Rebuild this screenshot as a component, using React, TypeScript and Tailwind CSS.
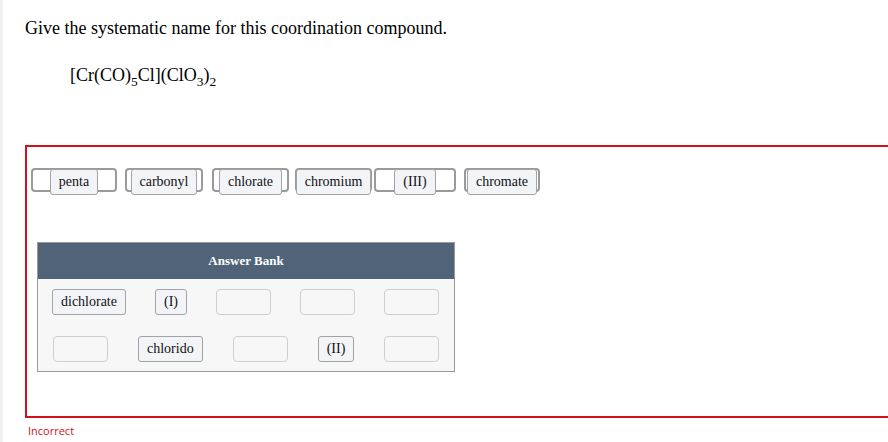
import React from "react";

type Slot = { label: string; w: string; ml: string };

const slots: Slot[] = [
  { label: "penta", w: "w-[86px]", ml: "ml-0" },
  { label: "carbonyl", w: "w-[78px]", ml: "ml-[8px]" },
  { label: "chlorate", w: "w-[77px]", ml: "ml-[9px]" },
  { label: "chromium", w: "w-[77px]", ml: "ml-[6px]" },
  { label: "(III)", w: "w-[82px]", ml: "ml-[2px]" },
  { label: "chromate", w: "w-[76px]", ml: "ml-[8px]" },
];

// null = empty drop spot in the bank
const bankRow1: (string | null)[] = ["dichlorate", "(I)", null, null, null];
const bankRow2: (string | null)[] = [null, "chlorido", null, "(II)", null];

function Chip({ label }: { label: string }) {
  return (
    <div className="h-[26px] shrink-0 whitespace-nowrap px-2 border border-[#a3a3a3] rounded-[3px] bg-[#f2f4f8] text-[14px] leading-[24px] text-[#111]">
      {label}
    </div>
  );
}

function BankItem({ label }: { label: string | null }) {
  if (label) return <Chip label={label} />;
  return <div className="h-[26px] w-[55px] shrink-0 border border-[#cfcfcf] rounded-[4px]" />;
}

export default function App() {
  return (
    <div className="w-[888px] h-[442px] overflow-hidden bg-white flex font-['Liberation_Serif',serif] text-black">
      {/* left gutter */}
      <div className="w-[3px] shrink-0 bg-[#f1f1f1]" />

      <div className="flex-1 pl-[22px]">
        <div className="pt-[17px] text-[18px] leading-[22px]">
          Give the systematic name for this coordination compound.
        </div>

        <div className="mt-[25px] ml-[45px] text-[18px] leading-[22px]">
          [Cr(CO)<sub className="bottom-[-5px]">5</sub>Cl](ClO<sub className="bottom-[-5px]">3</sub>)
          <sub className="bottom-[-5px]">2</sub>
        </div>

        {/* answer area */}
        <div className="mt-[59px] w-[880px] h-[273px] border-2 border-[#d0121f] pt-[21px] pl-[4px]">
          <div className="flex items-start">
            {slots.map((s) => (
              <div
                key={s.label}
                className={`${s.w} ${s.ml} h-[24px] shrink-0 border-2 border-[#9a9a9a] rounded-[4px] flex justify-center items-start`}
              >
                <div className="mt-[-1px]">
                  <Chip label={s.label} />
                </div>
              </div>
            ))}
          </div>

          {/* Answer Bank */}
          <div className="mt-[50px] ml-[6px] w-[418px] border border-[#999]">
            <div className="h-[36px] bg-[#506379] flex items-center justify-center text-white font-bold text-[13px]">
              Answer Bank
            </div>
            <div className="bg-[#f7f7f7] pt-[10px] pb-[9px] px-[14px] flex flex-col gap-[21px]">
              <div className="flex gap-[29px]">
                {bankRow1.map((b, i) => (
                  <BankItem key={i} label={b} />
                ))}
              </div>
              <div className="flex gap-[30px] pl-[1px]">
                {bankRow2.map((b, i) => (
                  <BankItem key={i} label={b} />
                ))}
              </div>
            </div>
          </div>
        </div>

        <div className="mt-[5px] ml-[3px] font-['Open_Sans',sans-serif] text-[11px] leading-[15px] text-[#d0121f]">
          Incorrect
        </div>
      </div>
    </div>
  );
}
